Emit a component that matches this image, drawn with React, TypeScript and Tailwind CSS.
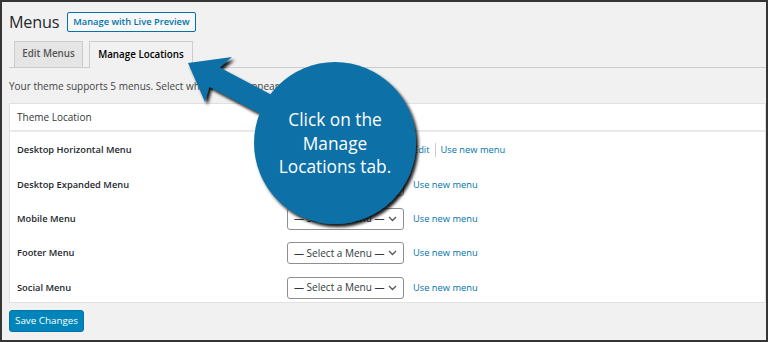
import React from "react";

const rows = [
  { label: "Desktop Horizontal Menu", edit: true, covered: true },
  { label: "Desktop Expanded Menu", edit: false, covered: true },
  { label: "Mobile Menu", edit: false, covered: false },
  { label: "Footer Menu", edit: false, covered: false },
  { label: "Social Menu", edit: false, covered: false },
];

function Chevron() {
  return (
    <svg width="9" height="6" viewBox="0 0 9 6" className="shrink-0">
      <path d="M1 1 L4.5 4.5 L8 1" fill="none" stroke="#555" strokeWidth="1.3" />
    </svg>
  );
}

export default function App() {
  return (
    <div className="relative w-[768px] h-[342px] overflow-hidden border-2 border-[#353535] bg-[#f1f1f1] font-['Open_Sans','Noto_Sans',sans-serif] text-[#444]">
      <div className="pl-[7px]">
        {/* title */}
        <div className="flex items-center h-[20px] mt-[10px]">
          <h1 className="text-[16.2px] leading-none text-[#23282d] tracking-[-0.2px]">Menus</h1>
          <div className="ml-[8px] h-[20px] px-[5px] flex items-center border border-[#0073aa] rounded-[2px] bg-[#f7f7f7] text-[9.3px] font-semibold text-[#0073aa]">
            Manage with Live Preview
          </div>
        </div>
        {/* tabs */}
        <div className="mt-[10px] flex items-end h-[26px] border-b border-[#cccccc] pl-[5px] gap-[6px]">
          <div className="h-[26px] w-[69px] flex items-center justify-center border border-b-0 border-[#cccccc] bg-[#e5e5e5] text-[9.8px] font-semibold text-[#555]">
            Edit Menus
          </div>
          <div className="h-[27px] mb-[-1px] w-[104px] flex items-center justify-center border border-b-0 border-[#cccccc] bg-[#f1f1f1] text-[9.8px] font-semibold text-[#000]">
            Manage Locations
          </div>
        </div>
        <p className="mt-[12px] text-[10px] leading-[13px] text-[#444]">
          Your theme supports 5 menus. Select which menu appears in each location.
        </p>
        {/* table */}
        <div className="mt-[10px] h-[200px] bg-white border border-[#e1e1e1]">
          <div className="h-[28px] flex items-center pl-[7px] border-b-2 border-[#e9e9e9] text-[10px] text-[#32373c]">
            Theme Location
          </div>
          <div className="pt-[1px]">
            {rows.map((r) => (
              <div key={r.label} className="h-[34.4px] flex items-center">
                <div className="w-[277px] pl-[7px] text-[9.3px] font-semibold text-[#23282d]">{r.label}</div>
                <div className="w-[117px] h-[22px] flex items-center justify-between pl-[6px] pr-[6px] border border-[#8c8f94] rounded-[3px] bg-white text-[10px] text-[#32373c]">
                  <span>{r.covered ? "" : "— Select a Menu —"}</span>
                  <Chevron />
                </div>
                <div className="ml-[9px] flex items-center text-[9.3px] text-[#0073aa]">
                  {r.edit && (
                    <>
                      <span>Edit</span>
                      <span className="mx-[5px] w-px h-[14px] bg-[#ccc]" />
                    </>
                  )}
                  <span>Use new menu</span>
                </div>
              </div>
            ))}
          </div>
        </div>
        <div className="mt-[7px] w-[75px] h-[22px] flex items-center justify-center rounded-[3px] bg-[#0085ba] border border-[#0073aa] text-[9.8px] text-white">
          Save Changes
        </div>
      </div>

      {/* callout overlay */}
      <svg className="absolute left-[-2px] top-[-2px]" width="768" height="342" viewBox="0 0 768 342">
        <defs>
          <filter id="sh" x="-20%" y="-20%" width="150%" height="150%">
            <feDropShadow dx="2.5" dy="3" stdDeviation="1.6" floodColor="#000" floodOpacity="0.9" />
          </filter>
        </defs>
        <g filter="url(#sh)" fill="#0a70a7">
          <polygon points="188,63 232,57 219.7,67.4 343,133 333,152 209.3,86.8 205,102" />
          <circle cx="335" cy="143" r="81" />
        </g>
      </svg>
      <div className="absolute left-[253px] top-[109px] w-[160px] flex flex-col items-center gap-[6.5px] text-white text-[17.3px] leading-[17px]">
        <span>Click on the</span>
        <span>Manage</span>
        <span>Locations tab.</span>
      </div>
    </div>
  );
}
